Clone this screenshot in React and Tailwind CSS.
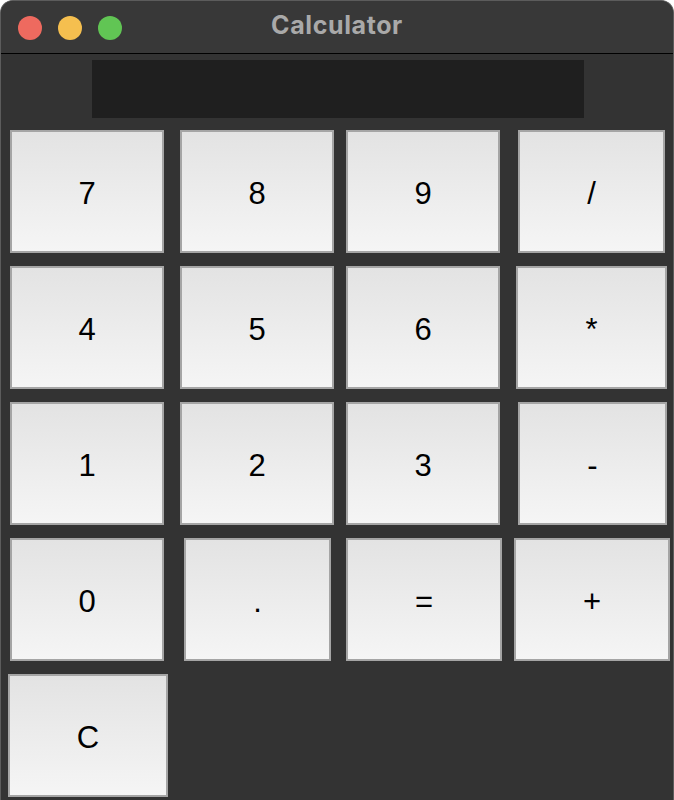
import React, { useState } from 'react';

// Key rows; each key carries its own offset and width, as laid out by the window's grid-bag
const rows = [
    [
        { label: '7', cls: 'ml-[9px] w-[154px]' },
        { label: '8', cls: 'ml-[16px] w-[154px]' },
        { label: '9', cls: 'ml-[12px] w-[154px]' },
        { label: '/', cls: 'ml-[18px] w-[147px]' },
    ],
    [
        { label: '4', cls: 'ml-[9px] w-[154px]' },
        { label: '5', cls: 'ml-[16px] w-[154px]' },
        { label: '6', cls: 'ml-[12px] w-[154px]' },
        { label: '*', cls: 'ml-[16px] w-[151px]' },
    ],
    [
        { label: '1', cls: 'ml-[9px] w-[154px]' },
        { label: '2', cls: 'ml-[16px] w-[154px]' },
        { label: '3', cls: 'ml-[12px] w-[154px]' },
        { label: '-', cls: 'ml-[18px] w-[149px]' },
    ],
    [
        { label: '0', cls: 'ml-[9px] w-[154px]' },
        { label: '.', cls: 'ml-[20px] w-[147px]' },
        { label: '=', cls: 'ml-[15px] w-[156px]' },
        { label: '+', cls: 'ml-[12px] w-[156px]' },
    ],
    [
        { label: 'C', cls: 'ml-[7px] w-[160px]' },
    ],
];

const Key = ({ label, cls, onPress }) => (
    <button
        onClick={() => onPress(label)}
        className={`${cls} h-[123px] shrink-0 flex items-center justify-center pt-[5px] border-2 border-[#a5a5a5] bg-gradient-to-b from-[#e3e3e3] to-[#f5f5f5] text-black text-[31px] font-['Liberation_Sans',Arial,sans-serif]`}
    >
        {label}
    </button>
);

export default function App() {
    const [display, setDisplay] = useState('');

    const press = (key) => {
        if (key === 'C') return setDisplay('');
        if (key === '=') {
            try {
                // eslint-disable-next-line no-new-func
                setDisplay(String(Function(`return (${display})`)()));
            } catch {
                setDisplay('Error');
            }
            return;
        }
        setDisplay((d) => d + key);
    };

    return (
        <div className="w-[674px] h-[800px] bg-white overflow-hidden">
            <div className="h-full flex flex-col rounded-t-[13px] border-x border-t border-[#5c5c5c] bg-[#333333] overflow-hidden">
                {/* title bar */}
                <div className="h-[53px] shrink-0 grid grid-cols-[1fr_auto_1fr] items-center bg-[#383838] border-b border-black">
                    <div className="flex items-center gap-[16px] pl-[17px] pt-[2px]">
                        <span className="w-[24px] h-[24px] rounded-full bg-[#ee6a5f]" />
                        <span className="w-[24px] h-[24px] rounded-full bg-[#f5bf4f]" />
                        <span className="w-[24px] h-[24px] rounded-full bg-[#61c554]" />
                    </div>
                    <div className="text-[#a9a9a9] text-[25px] font-bold tracking-[0.6px] font-['Inter','Liberation_Sans',sans-serif] pb-[2px]">
                        Calculator
                    </div>
                    <div />
                </div>

                {/* read-out */}
                <div className="ml-[91px] mt-[6px] w-[492px] h-[58px] shrink-0 bg-[#1f1f1f] text-white text-[28px] flex items-center justify-end px-3 font-['Liberation_Sans',Arial,sans-serif]">
                    {display}
                </div>

                {/* keypad */}
                <div className="mt-[12px] flex flex-col gap-[13px]">
                    {rows.map((row, i) => (
                        <div key={i} className="flex">
                            {row.map((k) => (
                                <Key key={k.label} {...k} onPress={press} />
                            ))}
                        </div>
                    ))}
                </div>
            </div>
        </div>
    );
}
